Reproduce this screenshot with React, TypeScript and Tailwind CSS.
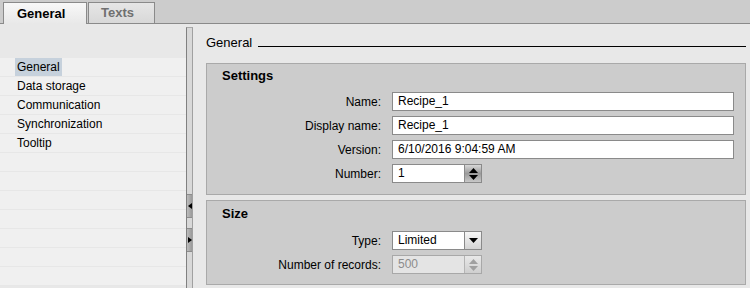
import type { ReactNode } from 'react';

const NAV = ['General', 'Data storage', 'Communication', 'Synchronization', 'Tooltip'];
const EMPTY_ROWS = 7;

function UpDown({ disabled }: { disabled?: boolean }) {
  const fill = disabled ? '#a0a0a0' : '#000';
  return (
    <div
      className={`w-[17px] h-full flex flex-col items-center justify-center gap-[2px] border-l ${
        disabled
          ? 'border-[#b4b4b4] bg-gradient-to-b from-[#e8e8e8] to-[#cfcfcf]'
          : 'border-[#8a8a8a] bg-gradient-to-b from-[#d8d8d8] via-[#9a9a9a] to-[#c8c8c8]'
      }`}
    >
      <svg width="9" height="5" viewBox="0 0 9 5">
        <path d="M4.5 0 L9 5 L0 5 Z" fill={fill} />
      </svg>
      <svg width="9" height="5" viewBox="0 0 9 5">
        <path d="M0 0 L9 0 L4.5 5 Z" fill={fill} />
      </svg>
    </div>
  );
}

function DropButton() {
  return (
    <div className="w-[17px] h-full flex items-center justify-center border-l border-[#8a8a8a] bg-gradient-to-b from-[#f6f6f6] to-[#d4d4d4]">
      <svg width="9" height="5" viewBox="0 0 9 5">
        <path d="M0 0 L9 0 L4.5 5 Z" fill="#000" />
      </svg>
    </div>
  );
}

function Row({ label, children }: { label: string; children: ReactNode }) {
  return (
    <div className="flex items-center h-[19px]">
      <div className="w-[175px] text-right pr-px">{label}</div>
      <div className="ml-[10px] h-full">{children}</div>
    </div>
  );
}

function TextBox({ value, width = 'w-[342px]' }: { value: string; width?: string }) {
  return (
    <div className={`${width} h-[19px] bg-white border border-[#8a8a8a] pl-[5px] leading-[17px]`}>
      {value}
    </div>
  );
}

export default function App() {
  return (
    <div
      className="w-[750px] h-[288px] overflow-hidden text-[12px] text-black bg-[#e8e8e8]"
      style={{ fontFamily: '"Liberation Sans", Arial, sans-serif' }}
    >
      {/* tab strip */}
      <div className="h-[24px] bg-[#cccccc] border-b border-[#8a8a8a] flex items-end pl-[3px]">
        <div className="h-[22px] w-[84px] -mb-px border border-b-0 border-[#8a8a8a] bg-gradient-to-b from-[#f8f8f8] to-[#e8e8e8] pl-[13px] font-bold text-[13px] leading-[21px]">
          General
        </div>
        <div className="h-[21px] w-[67px] ml-[1px] border border-b-0 border-[#8a8a8a] bg-gradient-to-b from-[#e6e6e6] to-[#d8d8d8] pl-[12px] font-bold text-[13px] leading-[20px] text-[#707070]">
          Texts
        </div>
      </div>

      <div className="flex h-[264px]">
        {/* navigation */}
        <div className="w-[186px] pt-[34px] bg-[#e8e8e8] flex flex-col">
          {NAV.map((n, i) => (
            <div key={n} className="h-[19px] bg-[#f0f0f0] border-b border-[#e7e7e7] flex items-start">
              <span
                className={`ml-[15px] px-[2px] h-[18px] leading-[18px] ${i === 0 ? 'bg-[#c6d1dc]' : ''}`}
              >
                {n}
              </span>
            </div>
          ))}
          {Array.from({ length: EMPTY_ROWS }).map((_, i) => (
            <div key={i} className="h-[19px] shrink-0 bg-[#f0f0f0] border-b border-[#e7e7e7]" />
          ))}
        </div>

        {/* splitter */}
        <div className="w-[7px] pt-[3px] bg-[#e8e8e8] flex flex-col">
          <div className="flex-1 border-l border-t border-r border-l-[#808080] border-t-[#a8a8a8] border-r-[#a0a0a0] bg-[#d8d8d8] flex flex-col">
            <div className="mt-[166px] h-[24px] border-y border-[#8c8c8c] bg-gradient-to-r from-[#bdbdbd] to-[#9a9a9a] flex items-center justify-center">
              <svg width="4" height="6" viewBox="0 0 4 6">
                <path d="M0 3 L4 0 L4 6 Z" fill="#000" />
              </svg>
            </div>
            <div className="mt-[10px] h-[24px] border-y border-[#8c8c8c] bg-gradient-to-r from-[#bdbdbd] to-[#9a9a9a] flex items-center justify-center">
              <svg width="4" height="6" viewBox="0 0 4 6">
                <path d="M0 0 L4 3 L0 6 Z" fill="#000" />
              </svg>
            </div>
          </div>
        </div>

        {/* property pane */}
        <div className="flex-1 pl-[13px] pr-[4px] pt-[10px] bg-[#e8e8e8]">
          <div className="flex items-start h-[18px]">
            <span className="text-[13px] leading-[18px]">General</span>
            <div className="flex-1 ml-[6px] mt-[12px] h-px bg-black" />
          </div>

          <div className="mt-[11px] h-[132px] border border-[#a9a9a9] bg-[#cccccc] pt-[4px]">
            <div className="pl-[15px] font-bold text-[13px] leading-[16px]">Settings</div>
            <div className="mt-[8px] flex flex-col gap-[5px]">
              <Row label="Name:">
                <TextBox value="Recipe_1" />
              </Row>
              <Row label="Display name:">
                <TextBox value="Recipe_1" />
              </Row>
              <Row label="Version:">
                <TextBox value="6/10/2016 9:04:59 AM" />
              </Row>
              <Row label="Number:">
                <div className="w-[90px] h-[19px] bg-white border border-[#8a8a8a] flex">
                  <div className="flex-1 pl-[5px] leading-[17px]">1</div>
                  <UpDown />
                </div>
              </Row>
            </div>
          </div>

          <div className="mt-[5px] h-[85px] border border-[#a9a9a9] bg-[#cccccc] pt-[5px]">
            <div className="pl-[15px] font-bold text-[13px] leading-[16px]">Size</div>
            <div className="mt-[9px] flex flex-col gap-[5px]">
              <Row label="Type:">
                <div className="w-[90px] h-[19px] bg-white border border-[#8a8a8a] flex">
                  <div className="flex-1 pl-[5px] leading-[17px]">Limited</div>
                  <DropButton />
                </div>
              </Row>
              <Row label="Number of records:">
                <div className="w-[90px] h-[19px] bg-[#e4e4e4] border border-[#a8a8a8] flex">
                  <div className="flex-1 pl-[5px] leading-[17px] text-[#8c8c8c]">500</div>
                  <UpDown disabled />
                </div>
              </Row>
            </div>
          </div>
        </div>
      </div>
    </div>
  );
}
